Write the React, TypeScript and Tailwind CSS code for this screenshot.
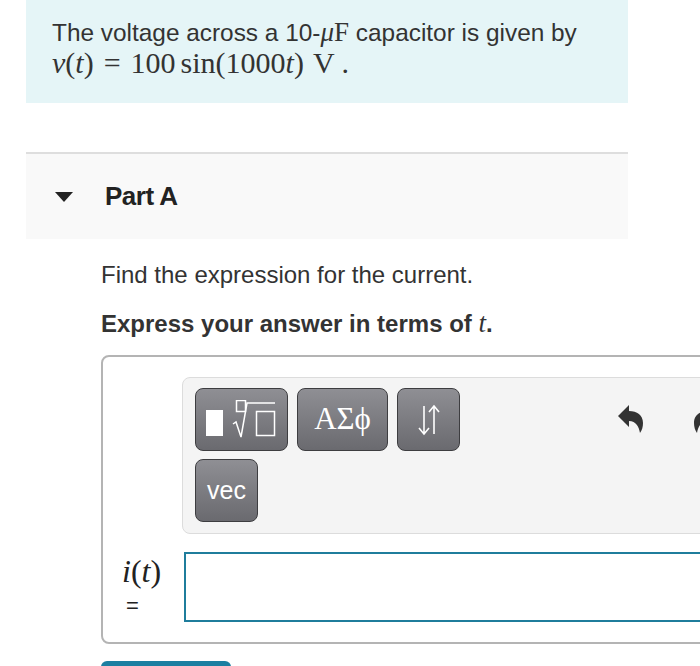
import React from 'react'

const sans = { fontFamily: '"Liberation Sans", Arial, sans-serif' }
const serif = { fontFamily: '"Liberation Serif", "Times New Roman", serif' }

function UndoIcon({ flip }: { flip?: boolean }) {
  return (
    <svg width="27" height="30" viewBox="0 0 27 30" className={flip ? '-scale-x-100' : ''}>
      <path
        d="M0 12 L11 1 L11 7 C19 7 25 11 25 19 C25 23 24 26 22 29 C21 23 18 17 11 17 L11 23 Z"
        fill="#333"
      />
    </svg>
  )
}

// template glyph: filled block plus n-th root with empty slots
function RootIcon() {
  return (
    <svg width="72" height="40" viewBox="0 0 72 40" fill="none" stroke="white" strokeWidth="1.5">
      <rect x="0" y="10" width="17" height="26" fill="white" stroke="none" />
      <rect x="30.5" y="0.5" width="9" height="11" />
      <path d="M27 24 L30 22 L35 37 L41 3 L69 3" />
      <rect x="50.5" y="11.5" width="18" height="24" />
    </svg>
  )
}

function SwapIcon() {
  return (
    <svg width="22" height="32" viewBox="0 0 22 32" fill="none" stroke="white" strokeWidth="1.6">
      <path d="M6 2 L6 30 M1 24 L6 30 L11 24" />
      <path d="M16 30 L16 2 M11 8 L16 2 L21 8" />
    </svg>
  )
}

function ToolButton({ children, className = '' }: { children: React.ReactNode; className?: string }) {
  return (
    <button
      className={`flex h-[63px] items-center justify-center rounded-[8px] border border-[#3d3d40] bg-gradient-to-b from-[#8f8f94] to-[#6a6a6f] text-white ${className}`}
    >
      {children}
    </button>
  )
}

export default function App() {
  return (
    <div className="relative h-[666px] w-[700px] overflow-hidden bg-white text-[#222]" style={sans}>
      <div className="ml-[26px] h-[103px] w-[602px] bg-[#e5f5f7] pl-[26px] pt-[18px]">
        <p className="h-[30px] text-[24.4px] leading-[30px] text-[#333]">
          The voltage across a 10-<span style={serif} className="text-[27px] leading-none italic">μ</span>
          <span style={serif} className="text-[27px] leading-none">F</span> capacitor is given by
        </p>
        <p style={serif} className="h-[30px] text-[30px] leading-[30px] text-[#333]">
          <i>v</i>(<i>t</i>)<span className="mx-[10px]">=</span>100<span className="ml-[5px]">sin</span>(1000<i>t</i>)<span className="ml-[9px]">V .</span>
        </p>
      </div>

      <div className="ml-[26px] mt-[49px] flex h-[87px] w-[602px] items-center border-t-2 border-[#dedede] bg-[#f9f9f9]">
        <svg width="20" height="12" viewBox="0 0 20 12" className="ml-[28px] mt-[1px]">
          <path d="M1 1 L19 1 L10 11 Z" fill="#222" />
        </svg>
        <span className="ml-[31px] text-[26px] font-bold tracking-[-0.5px] text-[#222]">Part A</span>
      </div>

      <div className="ml-[101px]">
        <p className="mt-[22px] text-[24px] leading-[28px] text-[#333]">Find the expression for the current.</p>
        <p className="mt-[21px] text-[24px] font-bold leading-[28px] text-[#333]">
          Express your answer in terms of <i style={serif} className="text-[27px] font-normal leading-none">t</i>.
        </p>

        <div className="mt-[17px] h-[289px] w-[640px] rounded-[8px] border-2 border-[#b4b4b4] bg-white">
          <div className="ml-[79px] mt-[20px] h-[157px] w-[560px] rounded-[8px] border border-[#dcdcdc] bg-[#f4f4f4] px-[12px] pt-[10px]">
            <div className="flex items-start">
              <div className="flex flex-col gap-[8px]">
                <div className="flex gap-[9px]">
                  <ToolButton className="w-[93px]">
                    <RootIcon />
                  </ToolButton>
                  <ToolButton className="w-[91px]">
                    <span style={serif} className="text-[31px]">ΑΣϕ</span>
                  </ToolButton>
                  <ToolButton className="w-[63px]">
                    <SwapIcon />
                  </ToolButton>
                </div>
                <ToolButton className="w-[63px]">
                  <span className="text-[25px]">vec</span>
                </ToolButton>
              </div>
              <div className="ml-[158px] mt-[16px] flex gap-[47px]">
                <UndoIcon />
                <UndoIcon flip />
              </div>
            </div>
          </div>

          <div className="mt-[18px] flex">
            <div className="w-[81px] pl-[19px] text-[#222]">
              <div style={serif} className="text-[32px] leading-[38px]">
                <i>i</i>(<i>t</i>)
              </div>
              <div className="ml-[4px] mt-[4px] text-[22px] leading-[24px]">=</div>
            </div>
            <div className="h-[70px] w-[560px] border-2 border-[#1f7d9c] bg-white" />
          </div>
        </div>

        <div className="mt-[17px] h-[20px] w-[130px] rounded-t-[6px] bg-[#1b7fa1]" />
      </div>
    </div>
  )
}
